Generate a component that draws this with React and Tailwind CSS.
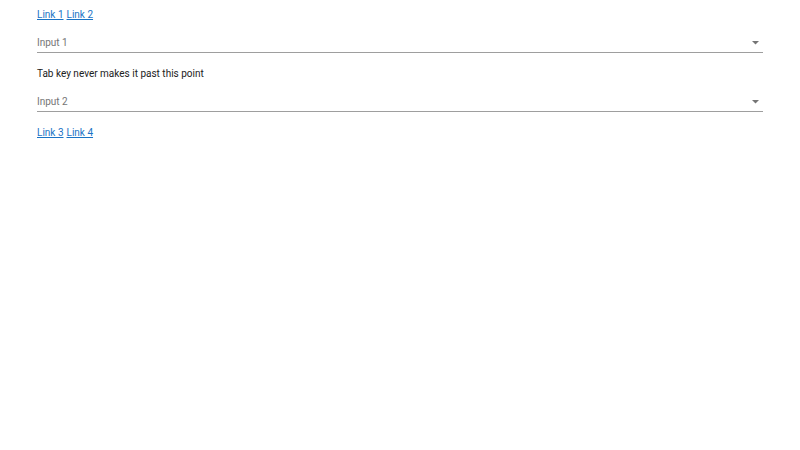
import React from "react";

const Arrow = () => (
  <svg width="7" height="4" viewBox="0 0 7 4" className="shrink-0">
    <path d="M0 0 L7 0 L3.5 3.5 Z" fill="#757575" />
  </svg>
);

const SelectField = ({ label }) => (
  <div className="flex items-center justify-between border-b border-[#9e9e9e] pb-[2px] pr-[4px]">
    <span className="text-[10px] leading-[14px] text-[#757575]">{label}</span>
    <Arrow />
  </div>
);

const App = () => {
  return (
    <div className="min-h-[450px] bg-white px-[37px] pt-[9px] font-['Roboto',sans-serif] text-[10px] text-[#212121]">
      <div className="flex gap-[3px] leading-[12px]">
        <a href="#" className="text-[#1a73c5] underline">Link 1</a>
        <a href="#" className="text-[#1a73c5] underline">Link 2</a>
      </div>
      <div className="mt-[15px]">
        <SelectField label="Input 1" />
      </div>
      <p className="mt-[15px] leading-[12px]">Tab key never makes it past this point</p>
      <div className="mt-[15px]">
        <SelectField label="Input 2" />
      </div>
      <div className="mt-[15px] flex gap-[3px] leading-[12px]">
        <a href="#" className="text-[#1a73c5] underline">Link 3</a>
        <a href="#" className="text-[#1a73c5] underline">Link 4</a>
      </div>
    </div>
  );
};

export default App;
